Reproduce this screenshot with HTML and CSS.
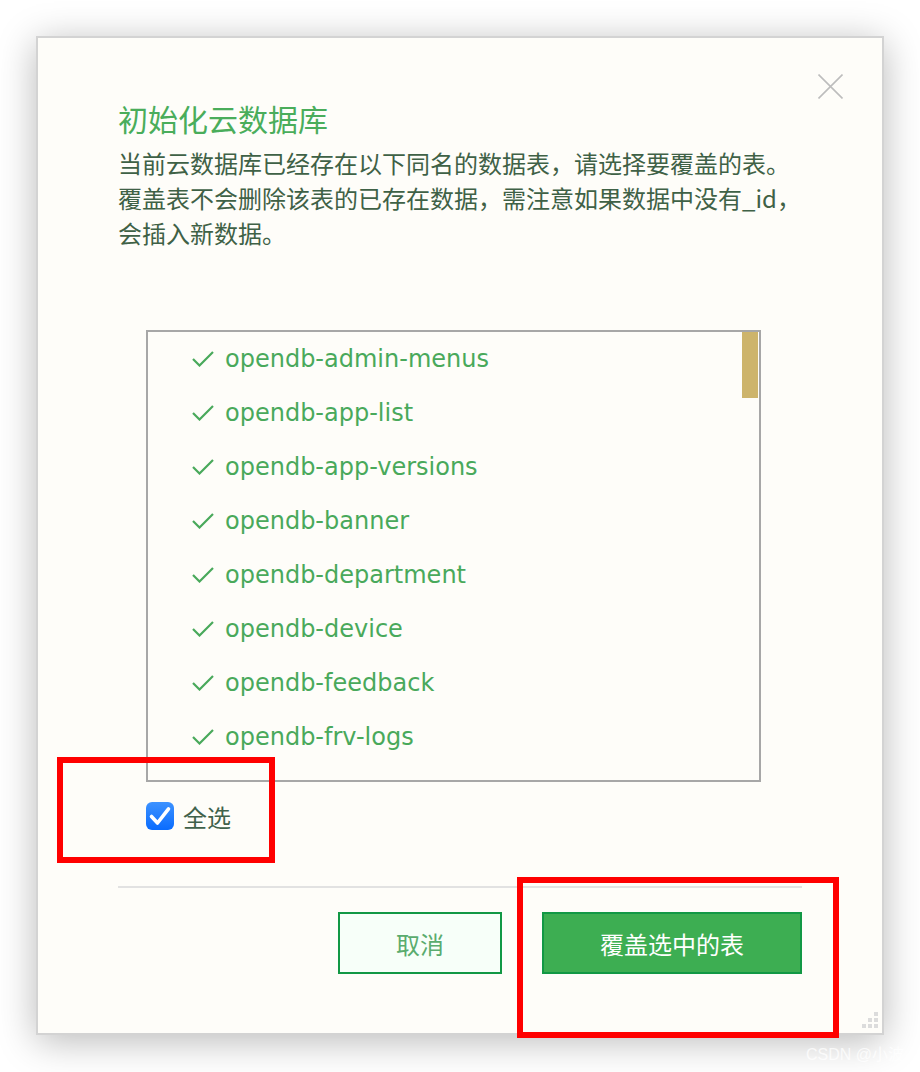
FILE: index.html
```html
<!DOCTYPE html>
<html lang="zh-CN">
<head>
  <meta charset="UTF-8" />
  <meta name="viewport" content="width=device-width, initial-scale=1.0"/>
  <title>初始化云数据库</title>
  <link rel="stylesheet" href="styles.css">
</head>
<body>
  <div class="dialog">
    <button class="close" aria-label="关闭">
      <svg width="25" height="25" viewBox="0 0 25 25"><path d="M0.5 0.5 L24.5 24.5 M24.5 0.5 L0.5 24.5" /></svg>
    </button>

    <h2 class="title">初始化云数据库</h2>
    <p class="desc">当前云数据库已经存在以下同名的数据表，请选择要覆盖的表。<br>覆盖表不会删除该表的已存在数据，需注意如果数据中没有_id，<br>会插入新数据。</p>

    <div class="table-list">
      <ul id="tables"></ul>
      <div class="thumb"></div>
    </div>

    <label class="select-all">
      <span class="box">
        <svg width="28" height="28" viewBox="0 0 28 28"><path d="M5.5 14.5 L11.5 21 L22.5 6.8" /></svg>
      </span>
      全选
    </label>

    <div class="divider"></div>

    <div class="actions">
      <button class="btn btn-cancel">取消</button>
      <button class="btn btn-primary">覆盖选中的表</button>
    </div>

    <svg class="grip" width="16" height="16" viewBox="0 0 16 16">
      <rect x="12" y="0" width="4" height="4" />
      <rect x="6" y="6" width="4" height="4" />
      <rect x="12" y="6" width="4" height="4" />
      <rect x="0" y="12" width="4" height="4" />
      <rect x="6" y="12" width="4" height="4" />
      <rect x="12" y="12" width="4" height="4" />
    </svg>
  </div>

  <div class="mark mark-select"></div>
  <div class="mark mark-submit"></div>
  <div class="watermark">CSDN @小波</div>

  <script>
    const tables = [
      "opendb-admin-menus",
      "opendb-app-list",
      "opendb-app-versions",
      "opendb-banner",
      "opendb-department",
      "opendb-device",
      "opendb-feedback",
      "opendb-frv-logs"
    ];

    const tick = '<svg class="tick" width="22" height="16" viewBox="0 0 22 16"><path d="M1 8 L7.5 14.5 L21 1" /></svg>';
    let html = "";
    tables.forEach(name => {
      html += `<li>${tick}<span>${name}</span></li>`;
    });
    document.getElementById('tables').innerHTML = html;
  </script>
</body>
</html>
```

FILE: styles.css
```css
body {
  margin: 0;
  background: #ffffff;
  font-family: "Noto Sans CJK SC", sans-serif;
  position: relative;
  height: 1072px;
  overflow: hidden;
}
.dialog {
  position: relative;
  box-sizing: border-box;
  width: 848px;
  height: 999px;
  margin: 36px 0 0 36px;
  padding: 60px 80px 0;
  background: #fefdf9;
  border: 2px solid #d3d3d3;
  box-shadow: 0 6px 36px rgba(0,0,0,0.28);
}
.close {
  position: absolute;
  top: 36px;
  right: 39px;
  padding: 0;
  border: none;
  background: none;
  cursor: pointer;
}
.close svg {
  display: block;
  stroke: #bdbdbd;
  stroke-width: 1.6;
  fill: none;
}
.title {
  margin: 0;
  font-size: 30px;
  line-height: 40px;
  font-weight: normal;
  color: #4aad5b;
}
.desc {
  margin: 7px 0 0;
  font-size: 24px;
  line-height: 35px;
  color: #3f6146;
  white-space: nowrap;
}
.table-list {
  position: relative;
  box-sizing: border-box;
  width: 615px;
  height: 452px;
  margin: 80px 0 0 28px;
  border: 2px solid #a7a7a7;
  overflow: hidden;
}
.table-list ul {
  list-style: none;
  margin: 0;
  padding: 0 0 0 44px;
}
.table-list li {
  display: flex;
  align-items: center;
  gap: 11px;
  height: 54px;
  font-family: "DejaVu Sans", sans-serif;
  font-size: 24px;
  color: #49a95b;
}
.tick {
  flex: none;
  stroke: #49a95b;
  stroke-width: 2.2;
  fill: none;
}
.thumb {
  position: absolute;
  top: 0;
  right: 1px;
  width: 16px;
  height: 66px;
  background: #cdb46b;
}
.select-all {
  display: flex;
  align-items: center;
  gap: 9px;
  height: 28px;
  margin: 20px 0 0 28px;
  font-size: 24px;
  color: #40614a;
}
.box {
  width: 28px;
  height: 28px;
  border-radius: 6px;
  background: linear-gradient(#3d92ff, #0a6cfe);
}
.box svg {
  display: block;
  stroke: #ffffff;
  stroke-width: 3.6;
  stroke-linecap: round;
  stroke-linejoin: round;
  fill: none;
}
.divider {
  height: 2px;
  margin-top: 56px;
  background: #e2e2e2;
}
.actions {
  display: flex;
  justify-content: flex-end;
  gap: 40px;
  margin-top: 24px;
}
.btn {
  box-sizing: border-box;
  height: 62px;
  border: 2px solid #129845;
  font-family: "Noto Sans CJK SC", sans-serif;
  font-size: 24px;
  cursor: pointer;
}
.btn-cancel {
  width: 164px;
  background: #f7fff9;
  color: #5aac6e;
}
.btn-primary {
  width: 260px;
  background: #3dae52;
  color: #ffffff;
}
.grip {
  position: absolute;
  right: 4px;
  bottom: 5px;
  fill: #dcdcdc;
}
.mark {
  position: absolute;
  box-sizing: border-box;
  border: 6px solid #ff0000;
}
.mark-select {
  left: 57px;
  top: 757px;
  width: 218px;
  height: 106px;
}
.mark-submit {
  left: 517px;
  top: 877px;
  width: 322px;
  height: 161px;
}
.watermark {
  position: absolute;
  left: 806px;
  top: 1041px;
  font-family: "Liberation Sans", "Noto Sans CJK SC", sans-serif;
  font-size: 16px;
  color: rgba(255,255,255,0.75);
  white-space: nowrap;
}
```
